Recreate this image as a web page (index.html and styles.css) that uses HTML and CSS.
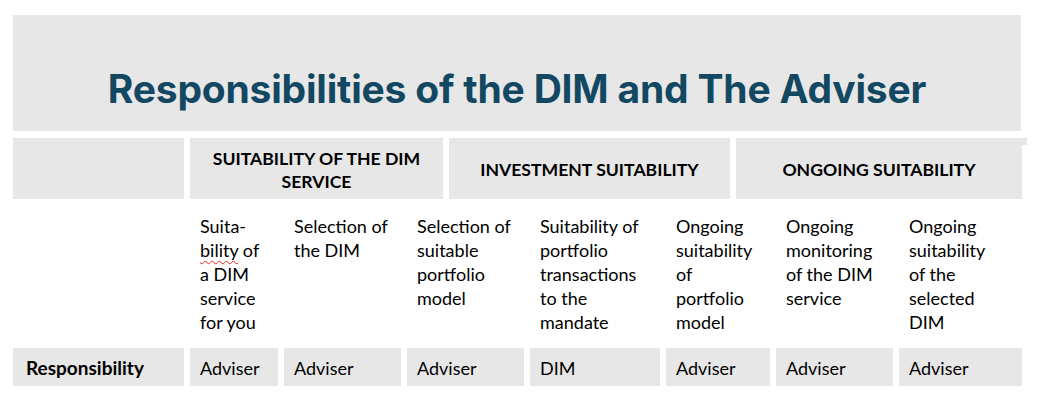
FILE: index.html
```html
<!DOCTYPE html>
<html lang="en">
<head>
<meta charset="utf-8">
<title>Responsibilities of the DIM and The Adviser</title>
<link rel="stylesheet" href="styles.css">
</head>
<body>
<main class="slide">
  <header class="title-box">
    <h1 class="title">Responsibilities of the DIM and The Adviser</h1>
  </header>

  <div class="group-row">
    <div class="group-cell"></div>
    <div class="group-cell">SUITABILITY OF THE DIM<br>SERVICE</div>
    <div class="group-cell">INVESTMENT SUITABILITY</div>
    <div class="group-cell group-cell--last">ONGOING SUITABILITY</div>
  </div>

  <div class="grid">
    <div class="desc"></div>
    <div class="desc">Suita-<br><span class="spell">bility</span> of<br>a DIM<br>service<br>for you</div>
    <div class="desc">Selection of<br>the DIM</div>
    <div class="desc">Selection of<br>suitable<br>portfolio<br>model</div>
    <div class="desc">Suitability of<br>portfolio<br>transactions<br>to the<br>mandate</div>
    <div class="desc">Ongoing<br>suitability<br>of<br>portfolio<br>model</div>
    <div class="desc">Ongoing<br>monitoring<br>of the DIM<br>service</div>
    <div class="desc">Ongoing<br>suitability<br>of the<br>selected<br>DIM</div>

    <div class="resp resp--label">Responsibility</div>
    <div class="resp">Adviser</div>
    <div class="resp">Adviser</div>
    <div class="resp">Adviser</div>
    <div class="resp">DIM</div>
    <div class="resp">Adviser</div>
    <div class="resp">Adviser</div>
    <div class="resp">Adviser</div>
  </div>
</main>
</body>
</html>
```

FILE: styles.css
```css
html, body {
  margin: 0;
  padding: 0;
  background: #ffffff;
}

.slide {
  width: 1009px;
  padding: 15px 0 0 13px;
  font-family: Lato, "Liberation Sans", sans-serif;
  color: #000000;
}

.title-box {
  background: #e7e7e7;
  height: 116px;
  display: flex;
  align-items: flex-start;
  justify-content: center;
  margin-right: 1px;
}

.title {
  margin: 0;
  padding-top: 50px;
  font-family: Inter, "Liberation Sans", sans-serif;
  font-weight: 700;
  font-size: 39px;
  line-height: 48px;
  color: #134862;
  letter-spacing: -0.2px;
}

.group-row {
  display: grid;
  grid-template-columns: 171px 253px 281px 286px;
  column-gap: 6px;
  margin-top: 7px;
  height: 61px;
}

.group-cell {
  background: #e7e7e7;
  display: flex;
  align-items: center;
  justify-content: center;
  text-align: center;
  font-weight: 700;
  font-size: 17.6px;
  line-height: 23px;
  white-space: nowrap;
  padding-top: 2px;
  box-sizing: border-box;
}

.group-cell--last {
  position: relative;
}

.group-cell--last::after {
  content: "";
  position: absolute;
  top: 0;
  right: -5px;
  width: 5px;
  height: 7px;
  background: #e7e7e7;
}

.grid {
  display: grid;
  grid-template-columns: 171px 88px 117px 117px 130px 104px 117px 123px;
  column-gap: 6px;
}

.desc {
  padding: 15px 0 14px 10px;
  font-size: 18px;
  line-height: 24px;
  white-space: nowrap;
  height: 149px;
  box-sizing: border-box;
}

.spell {
  text-decoration: underline wavy #e0281e;
  text-decoration-thickness: 1px;
  text-underline-offset: 3px;
}

.resp {
  background: #e7e7e7;
  height: 38px;
  padding-left: 10px;
  font-size: 18px;
  line-height: 40px;
  white-space: nowrap;
  box-sizing: border-box;
}

.resp--label {
  padding-left: 13px;
  font-weight: 700;
  font-size: 19px;
}
```
